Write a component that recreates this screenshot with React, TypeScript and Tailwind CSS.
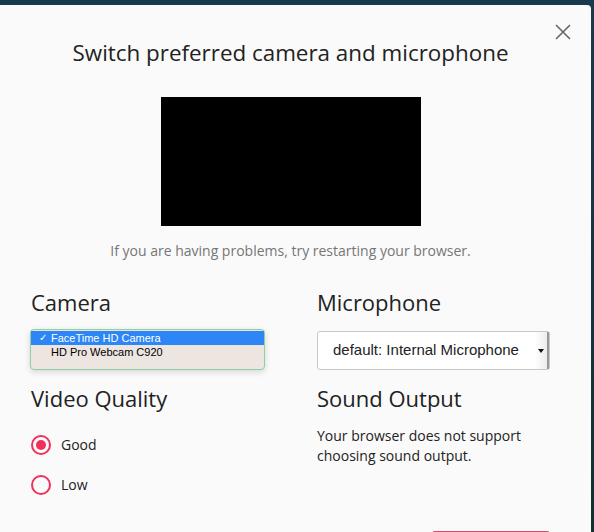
export default function App() {
  return (
    <div className="h-[532px] w-[594px] overflow-hidden bg-[linear-gradient(180deg,#173a4f_0%,#12302f_100%)] pt-[5px] font-['Open_Sans',sans-serif]">
      <div className="relative -ml-[10px] h-[540px] w-[601px] rounded-tr-[4px] bg-[#fafafa] text-[#222]">
        <button className="absolute right-[19px] top-[18px] text-[#666]">
          <svg width="18" height="18" viewBox="0 0 18 18" fill="none" stroke="currentColor" strokeWidth="1.6">
            <path d="M2 2 L16 16 M16 2 L2 16" />
          </svg>
        </button>

        <h1 className="pt-[32px] text-center text-[22.4px] leading-[32px] text-[#222]">
          Switch preferred camera and microphone
        </h1>

        <div className="mx-auto mt-[28px] h-[129px] w-[260px] bg-black" />

        <p className="mt-[14px] text-center text-[14px] leading-[22px] text-[#767676]">
          If you are having problems, try restarting your browser.
        </p>

        <div className="mt-[25px] grid grid-cols-[286px_1fr] pl-[41px]">
          <div>
            <h2 className="text-[22px] leading-[30px]">Camera</h2>
            <div className="mt-[12px] h-[41px] w-[235px] -translate-x-[1px] rounded-[4px] border border-[#8fcfa6] bg-[#ede5e0] py-[1px] font-['Liberation_Sans',sans-serif] text-[11px] leading-[14px] shadow-[0_2px_6px_rgba(0,0,0,0.15)]">
              <div className="flex items-center bg-[#2d86f5] text-white">
                <span className="w-[20px] pl-[8px] text-[10px]">✓</span>
                <span>FaceTime HD Camera</span>
              </div>
              <div className="flex items-center text-black">
                <span className="w-[20px]" />
                <span>HD Pro Webcam C920</span>
              </div>
            </div>
            <h2 className="mt-[13px] text-[22px] leading-[30px]">Video Quality</h2>
            <div className="mt-[21px] flex flex-col gap-[18px] text-[14px]">
              <label className="flex items-center gap-[10px]">
                <span className="flex h-[20px] w-[20px] items-center justify-center rounded-full border-2 border-[#f0305c]">
                  <span className="h-[10px] w-[10px] rounded-full bg-[#f0305c]" />
                </span>
                <span className="leading-[22px]">Good</span>
              </label>
              <label className="flex items-center gap-[10px]">
                <span className="h-[20px] w-[20px] rounded-full border-2 border-[#f0305c]" />
                <span className="leading-[22px]">Low</span>
              </label>
            </div>
          </div>

          <div>
            <h2 className="text-[22px] leading-[30px]">Microphone</h2>
            <div className="mt-[14px] flex h-[39px] w-[233px] items-stretch rounded-[3px] border border-[#c8c8c8] bg-white font-['Liberation_Sans',sans-serif] text-[15px] text-[#222]">
              <span className="flex flex-1 items-center pl-[15px]">default: Internal Microphone</span>
              <span className="flex w-[14px] items-center justify-center border-r-2 border-[#999] bg-[linear-gradient(90deg,#fff,#ececec)]">
                <svg width="6" height="4" viewBox="0 0 6 4">
                  <path d="M0 0 H6 L3 4 Z" fill="#111" />
                </svg>
              </span>
            </div>
            <h2 className="mt-[13px] text-[22px] leading-[30px]">Sound Output</h2>
            <p className="mt-[13px] text-[14px] leading-[20px]">
              Your browser does not support
              <br />
              choosing sound output.
            </p>
          </div>
        </div>

        <div className="absolute left-[442px] top-[526px] h-[30px] w-[118px] rounded-[3px] bg-[#e0436b]" />
      </div>
    </div>
  );
}
